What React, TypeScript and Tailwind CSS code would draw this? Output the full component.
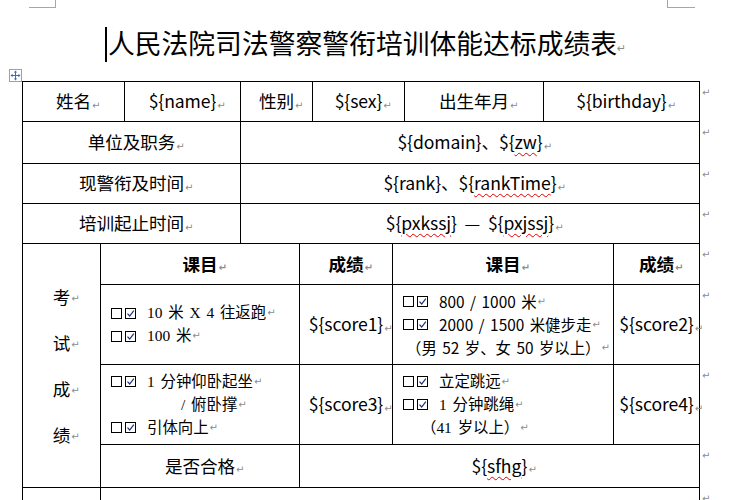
import React from 'react';

const sans = "font-['Noto_Sans_CJK_SC',sans-serif]";
const serif = "font-['Liberation_Serif','Noto_Sans_CJK_SC',serif]";

// paragraph mark that follows the text
function Pm() {
  return <span className="ml-px text-[10px] leading-none text-[#8c8c8c] font-['DejaVu_Sans',sans-serif]">↵</span>;
}

// centred text: Word centres without the mark
function Ctr({ children }: { children: React.ReactNode }) {
  return (
    <span className="relative">
      {children}
      <span className="absolute left-full bottom-[4px] ml-px text-[10px] leading-none text-[#8c8c8c] font-['DejaVu_Sans',sans-serif]">↵</span>
    </span>
  );
}

function Wavy({ children }: { children: React.ReactNode }) {
  return <span className="underline decoration-wavy decoration-[#e00000] decoration-1 underline-offset-[3px]">{children}</span>;
}

function Boxes() {
  return (
    <span className="inline-flex items-center gap-[3px] mr-[11px]">
      <span className="w-[11px] h-[11px] border border-black" />
      <span className="w-[11px] h-[11px] border border-black flex items-center justify-center">
        <svg width="9" height="9" viewBox="0 0 9 9">
          <path d="M1.5 4.6 L3.7 7 L7.8 1.6" stroke="#1c2f7a" strokeWidth="1.2" fill="none" />
        </svg>
      </span>
    </span>
  );
}

function Line({ children, className = '' }: { children: React.ReactNode; className?: string }) {
  return <div className={`flex items-center h-[23px] whitespace-pre ${className}`}>{children}</div>;
}

const cell = 'bg-white flex items-center justify-center';
const rowMarks = [39, 41, 39, 39, 40, 79, 79, 42, 60];

export default function App() {
  return (
    <div className={`relative w-[731px] h-[500px] overflow-hidden bg-white text-black ${sans}`}>
      {/* page corner marks */}
      <div className="absolute left-[29px] -top-px w-[27px] h-[9px] border-r border-b border-[#a6a6a6]" />
      <div className="absolute left-[667px] -top-px w-[28px] h-[9px] border-l border-b border-[#a6a6a6]" />

      {/* title */}
      <div className="pt-[25px] ml-[55px] w-[612px] flex justify-center">
        <span className="relative text-[26.8px] leading-[36px] pl-[3px]">
          <span className="absolute left-0 top-[2px] w-[2px] h-[35px] bg-black" />
          人民法院司法警察警衔培训体能达标成绩表
          <span className="absolute left-full bottom-[7px] text-[11px] leading-none text-[#8c8c8c] font-['DejaVu_Sans',sans-serif]">↵</span>
        </span>
      </div>

      {/* table move handle */}
      <div className="absolute left-[9px] top-[69px] w-[13px] h-[13px] border border-[#a0a0a0] bg-white flex items-center justify-center">
        <svg width="11" height="11" viewBox="0 0 11 11" fill="#3a6cc8" stroke="#3a6cc8">
          <path d="M5.5 2 V9 M2 5.5 H9" strokeWidth="1" />
          <path d="M5.5 0.5 L7.2 2.6 H3.8 Z M5.5 10.5 L7.2 8.4 H3.8 Z M0.5 5.5 L2.6 3.8 V7.2 Z M10.5 5.5 L8.4 3.8 V7.2 Z" strokeWidth="0" />
        </svg>
      </div>

      <div className="mt-[20px] ml-[22px] flex items-start">
        <div className="grid grid-cols-[77px_23px_115px_58px_12px_79px_11px_138px_69px_85px] grid-rows-[39px_41px_39px_39px_40px_79px_79px_42px_60px] gap-px bg-black border border-black w-[678px] text-[17.6px] tracking-[-0.1px]">
          {/* row 1 */}
          <div className={`${cell} col-span-2`}><Ctr>姓名</Ctr></div>
          <div className={cell}><Ctr>{'${name}'}</Ctr></div>
          <div className={`${cell} col-span-2`}><Ctr>性别</Ctr></div>
          <div className={`${cell} col-span-2`}><Ctr>{'${sex}'}</Ctr></div>
          <div className={cell}><Ctr>出生年月</Ctr></div>
          <div className={`${cell} col-span-2`}><Ctr>{'${birthday}'}</Ctr></div>

          {/* rows 2-4 */}
          <div className={`${cell} col-span-3`}><Ctr>单位及职务</Ctr></div>
          <div className={`${cell} col-span-7`}><Ctr>{'${domain}、${'}<Wavy>zw</Wavy>{'}'}</Ctr></div>
          <div className={`${cell} col-span-3`}><Ctr>现警衔及时间</Ctr></div>
          <div className={`${cell} col-span-7`}><Ctr>{'${rank}、${'}<Wavy>rankTime</Wavy>{'}'}</Ctr></div>
          <div className={`${cell} col-span-3`}><Ctr>培训起止时间</Ctr></div>
          <div className={`${cell} col-span-7`}>
            <Ctr>{'${'}<Wavy>pxkssj</Wavy>{'}'}&nbsp;&nbsp;—&nbsp;&nbsp;{'${'}<Wavy>pxjssj</Wavy>{'}'}</Ctr>
          </div>

          {/* exam section */}
          <div className={`${cell} row-span-4 flex-col pt-[3px] ${serif}`}>
            {['考', '试', '成', '绩'].map((c) => (
              <div key={c} className="leading-[46px]"><Ctr>{c}</Ctr></div>
            ))}
          </div>
          <div className={`${cell} col-span-3 font-bold`}><Ctr>课目</Ctr></div>
          <div className={`${cell} col-span-2 font-bold`}><Ctr>成绩</Ctr></div>
          <div className={`${cell} col-span-3 font-bold`}><Ctr>课目</Ctr></div>
          <div className={`${cell} font-bold`}><Ctr>成绩</Ctr></div>

          <div className={`bg-white col-span-3 flex flex-col justify-center pl-[10px] text-[15.4px] tracking-normal [word-spacing:2px] ${serif}`}>
            <Line><Boxes />10 米 X 4 往返跑<Pm /></Line>
            <Line><Boxes />100 米<Pm /></Line>
          </div>
          <div className={`${cell} col-span-2`}><Ctr>{'${score1}'}</Ctr></div>
          <div className="bg-white col-span-3 flex flex-col justify-center pl-[10px] text-[15.4px] tracking-normal [word-spacing:2px]">
            <Line><Boxes />800 / 1000 米<Pm /></Line>
            <Line><Boxes />2000 / 1500 米健步走<Pm /></Line>
            <Line className="pl-[3px]">（男 52 岁、女 50 岁以上）<Pm /></Line>
          </div>
          <div className={cell}><Ctr>{'${score2}'}</Ctr></div>

          <div className={`bg-white col-span-3 flex flex-col justify-center pl-[10px] text-[15.4px] tracking-normal [word-spacing:2px] ${serif}`}>
            <Line><Boxes />1 分钟仰卧起坐<Pm /></Line>
            <Line className="pl-[70px]">/ 俯卧撑<Pm /></Line>
            <Line><Boxes />引体向上<Pm /></Line>
          </div>
          <div className={`${cell} col-span-2`}><Ctr>{'${score3}'}</Ctr></div>
          <div className={`bg-white col-span-3 flex flex-col justify-center pl-[10px] text-[15.4px] tracking-normal [word-spacing:2px] ${serif}`}>
            <Line><Boxes />立定跳远<Pm /></Line>
            <Line><Boxes />1 分钟跳绳<Pm /></Line>
            <Line className="pl-[18px]">（41 岁以上）<Pm /></Line>
          </div>
          <div className={cell}><Ctr>{'${score4}'}</Ctr></div>

          <div className={`${cell} col-span-3`}><Ctr>是否合格</Ctr></div>
          <div className={`${cell} col-span-6`}><Ctr>{'${'}<Wavy>sfhg</Wavy>{'}'}</Ctr></div>

          <div className="bg-white" />
          <div className="bg-white col-span-9" />
        </div>

        {/* end-of-row marks */}
        <div className="flex flex-col gap-px pt-px ml-[2px]">
          {rowMarks.map((h, i) => (
            <div key={i} className="pt-[6px] text-[10px] leading-none text-[#8c8c8c] font-['DejaVu_Sans',sans-serif]" style={{ height: h }}>
              ↵
            </div>
          ))}
        </div>
      </div>
    </div>
  );
}
